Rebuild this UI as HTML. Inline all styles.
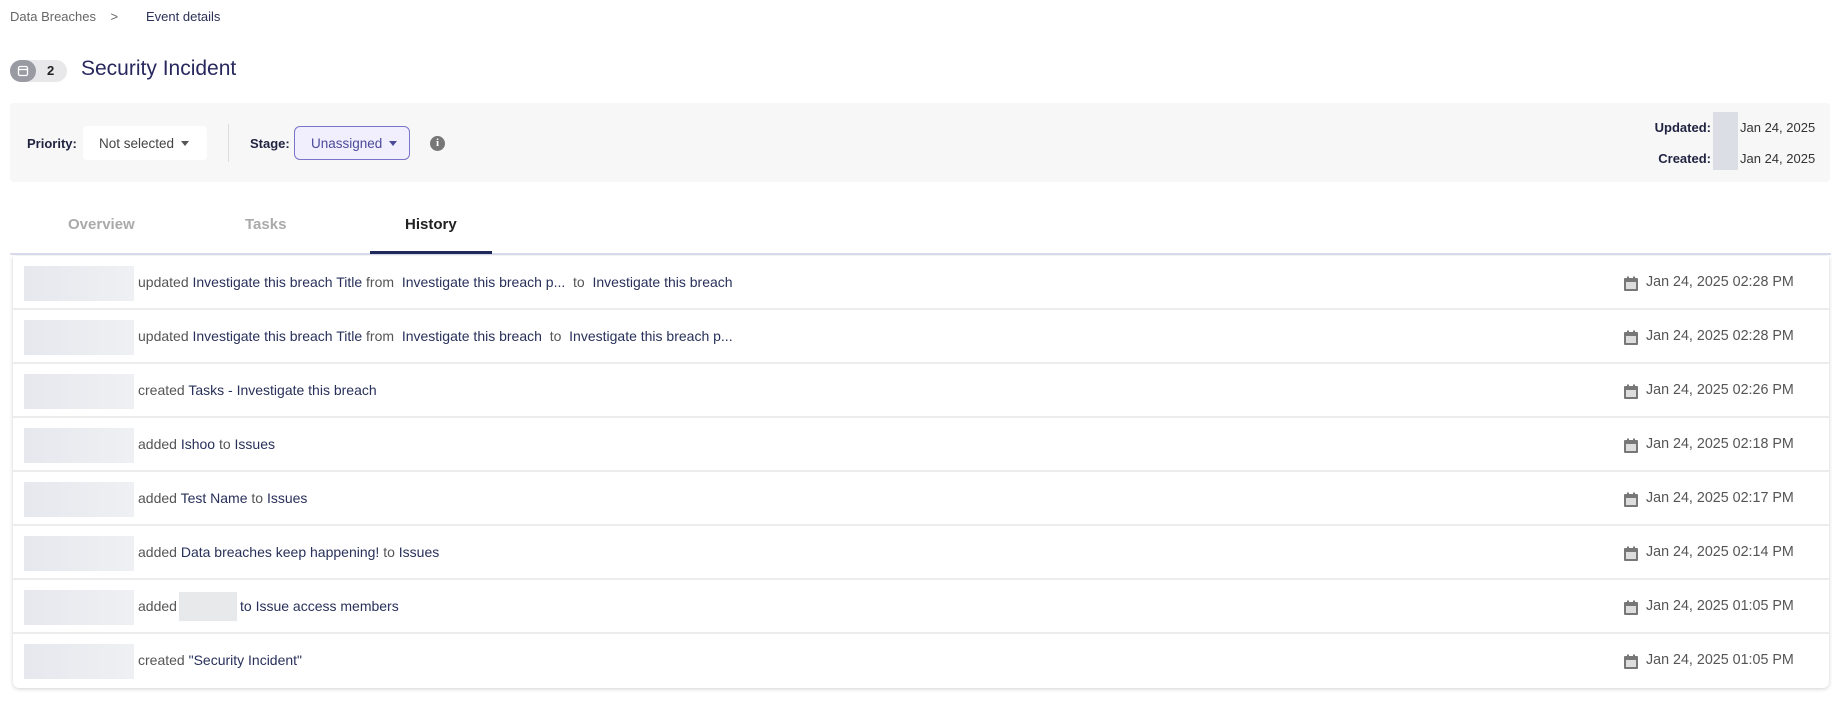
<!DOCTYPE html>
<html><head><meta charset="utf-8"><style>
*{box-sizing:border-box;margin:0;padding:0}
body{width:1843px;height:704px;background:#fff;font-family:"Liberation Sans",sans-serif;position:relative;overflow:hidden;color:#333}
.a{position:absolute;white-space:nowrap}
.bc{top:9px;left:10px;font-size:13px;color:#666}
.bc b{font-weight:normal;color:#2b3157;position:absolute;left:136px;top:0}
.badge{left:10px;top:60px;width:57px;height:22px;border-radius:11px;background:#e8e8ea}
.badge i{position:absolute;left:0;top:0;width:26px;height:22px;border-radius:11px;background:#9a9aa3}
.badge span{position:absolute;left:37px;top:3px;font-size:13px;font-weight:bold;color:#222}
.title{left:81px;top:57px;font-size:21px;color:#28285e}
.panel{left:10px;top:103px;width:1820px;height:79px;background:#f7f7f7;border-radius:4px}
.lbl{font-size:13px;font-weight:bold;color:#1f2340}
.dd{left:83px;top:126px;width:124px;height:34px;background:#fff;border-radius:4px;font-size:13.5px;color:#444;padding:10px 0 0 16px}
.st{left:294px;top:126px;width:116px;height:34px;background:#f1effd;border:1.5px solid #7b74c9;border-radius:6px;font-size:13.5px;color:#4b4a99;padding:9px 0 0 16px}
.tri{display:inline-block;width:0;height:0;border-left:4px solid transparent;border-right:4px solid transparent;border-top:5px solid #555;margin-left:7px;vertical-align:2px}
.tab{top:216px;font-size:15px;font-weight:bold;color:#aaa}
.card{left:13px;top:256px;width:1816px;height:432px;border-radius:0 0 6px 6px;box-shadow:0 1px 4px rgba(0,0,0,.18);background:#fff}
.row{position:absolute;left:0;width:1816px;height:54px;border-bottom:2px solid #ececec}
.av{position:absolute;left:11px;top:10px;width:110px;height:35px;background:linear-gradient(90deg,#e6e8ee,#eef0f3)}
.tx{position:absolute;left:125px;top:18px;font-size:14px;color:#555;white-space:pre}
.tx b{font-weight:normal;color:#28305a}
.dt{position:absolute;left:1633px;top:18px;font-size:14.3px;color:#555}
.cal{position:absolute;left:1610px;top:20px}
</style></head><body>
<div class="a bc">Data Breaches &nbsp;&nbsp;&nbsp;&gt;<b>Event details</b></div>
<div class="a badge"><i><svg width="26" height="22"><rect x="8.5" y="6.5" width="9" height="9" rx="1.5" fill="none" stroke="#fff" stroke-width="1.3"/><line x1="8.5" y1="9.5" x2="17.5" y2="9.5" stroke="#fff" stroke-width="1.3"/></svg></i><span>2</span></div>
<div class="a title">Security Incident</div>
<div class="a panel"></div>
<div class="a lbl" style="left:27px;top:136px">Priority:</div>
<div class="a dd">Not selected<span class="tri"></span></div>
<div class="a" style="left:228px;top:124px;width:1px;height:38px;background:#ddd"></div>
<div class="a lbl" style="left:250px;top:136px">Stage:</div>
<div class="a st">Unassigned<span class="tri" style="border-top-color:#4b4a99"></span></div>
<div class="a" style="left:430px;top:136px;width:15px;height:15px;border-radius:50%;background:#777;color:#fff;font-size:11px;font-weight:bold;text-align:center;line-height:15px;font-family:'Liberation Serif',serif">i</div>
<div class="a lbl" style="left:1650px;top:120px;width:61px;text-align:right">Updated:</div>
<div class="a lbl" style="left:1650px;top:151px;width:61px;text-align:right">Created:</div>
<div class="a" style="left:1713px;top:112px;width:25px;height:58px;background:#dbdee4"></div>
<div class="a" style="left:1740px;top:120px;font-size:13px;color:#333">Jan 24, 2025</div>
<div class="a" style="left:1740px;top:151px;font-size:13px;color:#333">Jan 24, 2025</div>
<div class="a tab" style="left:68px">Overview</div>
<div class="a tab" style="left:245px">Tasks</div>
<div class="a tab" style="left:405px;color:#222">History</div>
<div class="a" style="left:10px;top:253px;width:1821px;height:2px;background:#dcdcef"></div>
<div class="a" style="left:370px;top:251px;width:122px;height:3px;background:#1f2a5a"></div>
<div class="a card">
<div class="row" style="top:0"><div class="av"></div><div class="tx">updated <b>Investigate this breach Title</b> from  <b>Investigate this breach p...</b>  to  <b>Investigate this breach</b></div><svg class="cal" width="16" height="16"><rect x="1" y="2" width="14" height="13" rx="1" fill="#777"/><rect x="3" y="6" width="10" height="7" fill="#ddd"/><rect x="4" y="0.5" width="2" height="3" fill="#777"/><rect x="10" y="0.5" width="2" height="3" fill="#777"/></svg><div class="dt">Jan 24, 2025 02:28 PM</div></div>
<div class="row" style="top:54px"><div class="av"></div><div class="tx">updated <b>Investigate this breach Title</b> from  <b>Investigate this breach</b>  to  <b>Investigate this breach p...</b></div><svg class="cal" width="16" height="16"><rect x="1" y="2" width="14" height="13" rx="1" fill="#777"/><rect x="3" y="6" width="10" height="7" fill="#ddd"/><rect x="4" y="0.5" width="2" height="3" fill="#777"/><rect x="10" y="0.5" width="2" height="3" fill="#777"/></svg><div class="dt">Jan 24, 2025 02:28 PM</div></div>
<div class="row" style="top:108px"><div class="av"></div><div class="tx">created <b>Tasks - Investigate this breach</b></div><svg class="cal" width="16" height="16"><rect x="1" y="2" width="14" height="13" rx="1" fill="#777"/><rect x="3" y="6" width="10" height="7" fill="#ddd"/><rect x="4" y="0.5" width="2" height="3" fill="#777"/><rect x="10" y="0.5" width="2" height="3" fill="#777"/></svg><div class="dt">Jan 24, 2025 02:26 PM</div></div>
<div class="row" style="top:162px"><div class="av"></div><div class="tx">added <b>Ishoo</b> to <b>Issues</b></div><svg class="cal" width="16" height="16"><rect x="1" y="2" width="14" height="13" rx="1" fill="#777"/><rect x="3" y="6" width="10" height="7" fill="#ddd"/><rect x="4" y="0.5" width="2" height="3" fill="#777"/><rect x="10" y="0.5" width="2" height="3" fill="#777"/></svg><div class="dt">Jan 24, 2025 02:18 PM</div></div>
<div class="row" style="top:216px"><div class="av"></div><div class="tx">added <b>Test Name</b> to <b>Issues</b></div><svg class="cal" width="16" height="16"><rect x="1" y="2" width="14" height="13" rx="1" fill="#777"/><rect x="3" y="6" width="10" height="7" fill="#ddd"/><rect x="4" y="0.5" width="2" height="3" fill="#777"/><rect x="10" y="0.5" width="2" height="3" fill="#777"/></svg><div class="dt">Jan 24, 2025 02:17 PM</div></div>
<div class="row" style="top:270px"><div class="av"></div><div class="tx">added <b>Data breaches keep happening!</b> to <b>Issues</b></div><svg class="cal" width="16" height="16"><rect x="1" y="2" width="14" height="13" rx="1" fill="#777"/><rect x="3" y="6" width="10" height="7" fill="#ddd"/><rect x="4" y="0.5" width="2" height="3" fill="#777"/><rect x="10" y="0.5" width="2" height="3" fill="#777"/></svg><div class="dt">Jan 24, 2025 02:14 PM</div></div>
<div class="row" style="top:324px"><div class="av"></div><div class="tx">added</div><div class="tx" style="left:227px"><b>to Issue access members</b></div><div style="position:absolute;left:166px;top:12px;width:58px;height:29px;background:#e8e9eb"></div><svg class="cal" width="16" height="16"><rect x="1" y="2" width="14" height="13" rx="1" fill="#777"/><rect x="3" y="6" width="10" height="7" fill="#ddd"/><rect x="4" y="0.5" width="2" height="3" fill="#777"/><rect x="10" y="0.5" width="2" height="3" fill="#777"/></svg><div class="dt">Jan 24, 2025 01:05 PM</div></div>
<div class="row" style="top:378px;border-bottom:none"><div class="av"></div><div class="tx">created <b>"Security Incident"</b></div><svg class="cal" width="16" height="16"><rect x="1" y="2" width="14" height="13" rx="1" fill="#777"/><rect x="3" y="6" width="10" height="7" fill="#ddd"/><rect x="4" y="0.5" width="2" height="3" fill="#777"/><rect x="10" y="0.5" width="2" height="3" fill="#777"/></svg><div class="dt">Jan 24, 2025 01:05 PM</div></div>
</div>
</body></html>
